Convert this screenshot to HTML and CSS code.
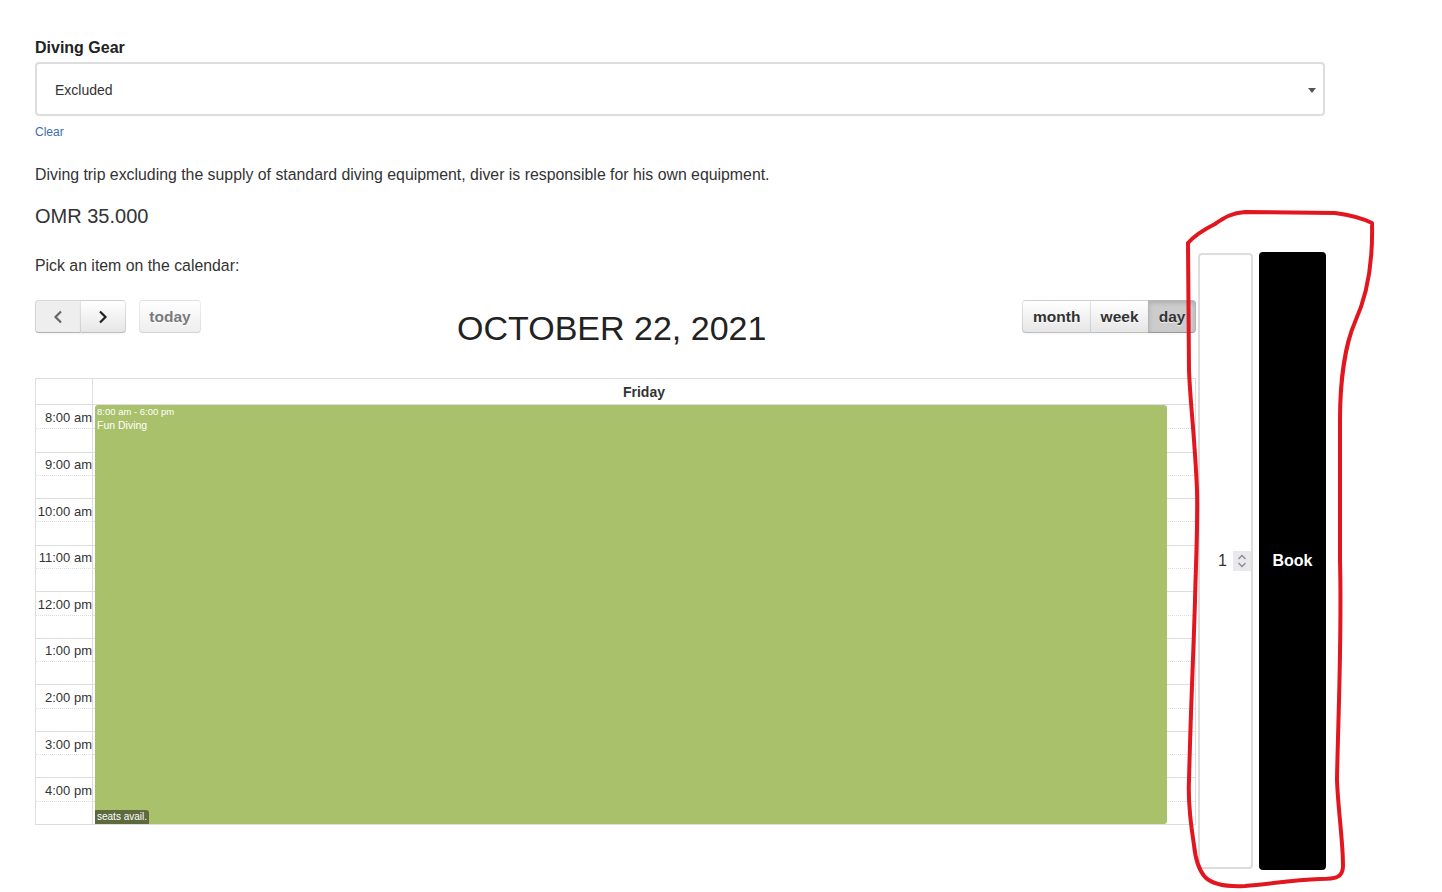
FILE: index.html
```html
<!DOCTYPE html>
<html>
<head>
<meta charset="utf-8">
<link rel="stylesheet" href="styles.css">
</head>
<body>
<div class="page">
  <div class="field-label">Diving Gear</div>
  <div class="select"><span class="select-value">Excluded</span><span class="caret"></span></div>
  <a class="clear" href="#">Clear</a>
  <p class="desc">Diving trip excluding the supply of standard diving equipment, diver is responsible for his own equipment.</p>
  <div class="price">OMR 35.000</div>
  <div class="booking">
    <div class="cal-col">
      <p class="pick">Pick an item on the calendar:</p>
      <div class="toolbar">
        <div class="tb-left">
          <div class="btn-group">
            <button class="fc-btn nav prev"><svg width="10" height="14" viewBox="0 0 10 14"><path d="M8 1.5 L2.5 7 L8 12.5" stroke="#666" stroke-width="2.2" fill="none"/></svg></button>
            <button class="fc-btn nav next"><svg width="10" height="14" viewBox="0 0 10 14"><path d="M2 1.5 L7.5 7 L2 12.5" stroke="#222" stroke-width="2.2" fill="none"/></svg></button>
          </div>
          <button class="fc-btn today">today</button>
        </div>
        <h2 class="title">OCTOBER 22, 2021</h2>
        <div class="btn-group">
          <button class="fc-btn">month</button>
          <button class="fc-btn">week</button>
          <button class="fc-btn active">day</button>
        </div>
      </div>
      <div class="cal">
        <div class="cal-head">
          <div class="axis-head"></div>
          <div class="day-head">Friday</div>
        </div>
        <div class="cal-body">
          <div class="slots">
            <div class="axis major"><span>8:00 am</span></div><div class="lane major"></div>
            <div class="axis minor"></div><div class="lane minor"></div>
            <div class="axis major"><span>9:00 am</span></div><div class="lane major"></div>
            <div class="axis minor"></div><div class="lane minor"></div>
            <div class="axis major"><span>10:00 am</span></div><div class="lane major"></div>
            <div class="axis minor"></div><div class="lane minor"></div>
            <div class="axis major"><span>11:00 am</span></div><div class="lane major"></div>
            <div class="axis minor"></div><div class="lane minor"></div>
            <div class="axis major"><span>12:00 pm</span></div><div class="lane major"></div>
            <div class="axis minor"></div><div class="lane minor"></div>
            <div class="axis major"><span>1:00 pm</span></div><div class="lane major"></div>
            <div class="axis minor"></div><div class="lane minor"></div>
            <div class="axis major"><span>2:00 pm</span></div><div class="lane major"></div>
            <div class="axis minor"></div><div class="lane minor"></div>
            <div class="axis major"><span>3:00 pm</span></div><div class="lane major"></div>
            <div class="axis minor"></div><div class="lane minor"></div>
            <div class="axis major"><span>4:00 pm</span></div><div class="lane major"></div>
            <div class="axis minor"></div><div class="lane minor"></div>
          </div>
          <div class="event">
            <div class="ev-time">8:00 am - 6:00 pm</div>
            <div class="ev-title">Fun Diving</div>
            <div class="ev-badge">seats avail.</div>
          </div>
        </div>
      </div>
    </div>
    <div class="qty">
      <span class="qty-val">1</span>
      <span class="spin"><svg width="18" height="20" viewBox="0 0 18 20"><path d="M5.5 8 L9 4.5 L12.5 8" stroke="#8a8a8a" stroke-width="1.3" fill="none"/><path d="M5.5 12 L9 15.5 L12.5 12" stroke="#8a8a8a" stroke-width="1.3" fill="none"/></svg></span>
    </div>
    <button class="book">Book</button>
  </div>
</div>
<svg class="annot" width="1442" height="892" viewBox="0 0 1442 892">
  <path d="M1188,243 C1195,235 1205,229 1215,224 C1225,217 1232,213 1245,212 L1335,213 C1350,215 1362,218 1372,223 C1373,262 1367,296 1355,322 C1345,345 1340,382 1340,420 L1340,560 C1342,640 1338,720 1337,780 C1338,810 1343,840 1343,866 C1343,878 1335,879 1320,879 C1292,880 1270,884 1245,886 C1225,887 1212,884 1205,877 C1197,868 1195,855 1194,845 C1190,820 1188,800 1189,780 C1191,700 1194,640 1195,600 C1196,560 1198,520 1197,490 C1195,440 1190,400 1189,370 C1189,320 1188,280 1188,243 Z" fill="none" stroke="#e2161f" stroke-width="4" stroke-linejoin="round"/>
</svg>
</body>
</html>
```
FILE: styles.css
```css
* { box-sizing: border-box; }
html, body { margin: 0; padding: 0; background: #fff; }
body {
  font-family: "Liberation Sans", Arial, sans-serif;
  color: #333;
  font-size: 16px;
  position: relative;
  width: 1442px;
  height: 892px;
  overflow: hidden;
}
.page {
  width: 1291px;
  margin-left: 35px;
  padding-top: 37px;
}
.field-label {
  font-weight: bold;
  font-size: 16px;
  line-height: 22px;
  color: #222;
  margin-bottom: 3px;
}
.select {
  height: 54px;
  width: 1290px;
  border: 2px solid #ddd;
  border-radius: 4px;
  display: flex;
  align-items: center;
  justify-content: space-between;
  padding: 2px 7px 0 18px;
}
.select-value { font-size: 14px; color: #333; }
.caret {
  width: 0; height: 0;
  border-left: 4px solid transparent;
  border-right: 4px solid transparent;
  border-top: 5px solid #555;
}
.clear {
  display: block;
  margin-top: 8px;
  font-size: 12px;
  line-height: 17px;
  color: #3b6eb1;
  text-decoration: none;
}
.desc {
  margin: 22px 0 0;
  font-size: 15.85px;
  line-height: 23px;
}
.price {
  margin-top: 16px;
  font-size: 20px;
  line-height: 28px;
}
.booking {
  margin-top: 22px;
  display: flex;
  align-items: flex-start;
}
.cal-col { width: 1161px; }
.pick {
  margin: 0 0 23px;
  padding-top: 2px;
  font-size: 15.85px;
  line-height: 23px;
}
.toolbar {
  height: 62px;
  margin-bottom: 16px;
  display: flex;
  justify-content: space-between;
  align-items: flex-start;
}
.tb-left { display: flex; gap: 13px; }
.btn-group { display: flex; }
.fc-btn {
  height: 33px;
  padding: 0 9.6px;
  font-family: "Liberation Sans", Arial, sans-serif;
  font-size: 15.5px;
  font-weight: bold;
  color: #333;
  background-color: #f5f5f5;
  background-image: linear-gradient(to bottom, #fff, #e6e6e6);
  border: 1px solid;
  border-color: rgba(0,0,0,.1) rgba(0,0,0,.1) rgba(0,0,0,.25);
  text-shadow: 0 1px 1px rgba(255,255,255,.75);
  box-shadow: inset 0 1px 0 rgba(255,255,255,.2), 0 1px 2px rgba(0,0,0,.05);
  border-radius: 0;
  display: flex;
  align-items: center;
  justify-content: center;
  padding-top: 1px;
}
.btn-group .fc-btn:first-child { border-radius: 4px 0 0 4px; }
.btn-group .fc-btn:last-child { border-radius: 0 4px 4px 0; }
.btn-group .fc-btn + .fc-btn { margin-left: -1px; }
.nav { width: 46px; padding: 0; }
.prev { background-image: none; background-color: #eeeeee; }
.today { border-radius: 4px; opacity: .65; box-shadow: none; width: 62px; }
.fc-btn.active {
  background-color: #ccc;
  background-image: none;
  box-shadow: inset 0 2px 4px rgba(0,0,0,.15), 0 1px 2px rgba(0,0,0,.05);
}
.title {
  margin: 11px 0 0;
  font-size: 34px;
  line-height: 34px;
  font-weight: normal;
  color: #222;
}
.cal {
  border: 1px solid #ddd;
  width: 1161px;
}
.cal-head {
  display: flex;
  height: 26px;
  border-bottom: 1px solid #ddd;
}
.axis-head { width: 57px; border-right: 1px solid #ddd; }
.day-head {
  flex: 1;
  text-align: center;
  font-weight: bold;
  font-size: 14px;
  line-height: 27px;
  color: #333;
}
.cal-body { position: relative; height: 419px; }
.slots {
  display: grid;
  grid-template-columns: 57px 1fr;
  grid-template-rows: repeat(18, 1fr);
  height: 419px;
}
.axis {
  border-right: 1px solid #ddd;
  display: flex;
  align-items: center;
  justify-content: flex-end;
  padding-right: 0;
  padding-top: 2px;
  font-size: 13px;
  color: #333;
  white-space: nowrap;
}
.major { border-top: 1px solid #ddd; }
.minor { border-top: 1px dotted #ddd; }
.slots > .major:nth-child(1), .slots > .major:nth-child(2) { border-top: none; }
.event {
  position: absolute;
  top: 0;
  bottom: 0;
  left: 59px;
  right: 28px;
  background: #aac16b;
  border-radius: 3px;
  color: #fff;
  padding: 0 2px;
}
.ev-time { font-size: 9.5px; line-height: 12px; padding-top: 1px; }
.ev-title { font-size: 10.5px; line-height: 14px; }
.ev-badge {
  position: absolute;
  left: 0;
  bottom: 0;
  background: #5c6a3e;
  color: #fff;
  font-size: 10px;
  line-height: 14px;
  padding: 0 2px;
  border-top-right-radius: 3px;
}
.qty {
  margin-left: 2px;
  margin-top: 1px;
  width: 55px;
  height: 616px;
  border: 2px solid #ddd;
  border-radius: 4px;
  display: flex;
  align-items: center;
  justify-content: flex-end;
}
.qty-val { font-size: 16px; color: #333; margin-right: 6px; }
.spin {
  width: 18px;
  height: 20px;
  background: #e9e9ed;
  display: block;
}
.spin svg { display: block; }
.book {
  margin-left: 6px;
  width: 67px;
  height: 618px;
  background: #000;
  border: none;
  border-radius: 4px;
  color: #fff;
  font-family: "Liberation Sans", Arial, sans-serif;
  font-size: 16px;
  font-weight: bold;
}
.annot {
  position: absolute;
  left: 0;
  top: 0;
  pointer-events: none;
}
```
